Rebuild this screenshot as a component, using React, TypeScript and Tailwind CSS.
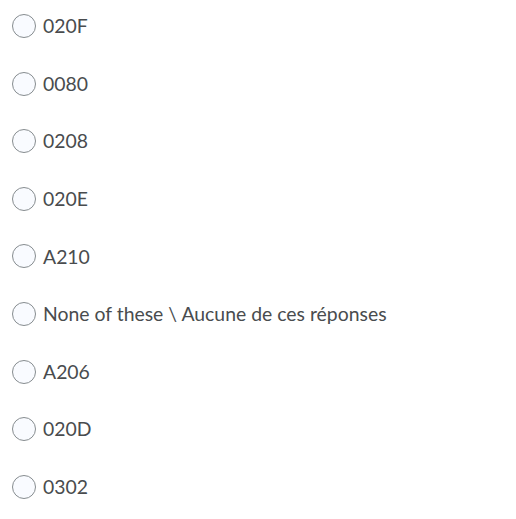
const options = [
  '020F',
  '0080',
  '0208',
  '020E',
  'A210',
  'None of these \\ Aucune de ces réponses',
  'A206',
  '020D',
  '0302',
];

export default function App() {
  return (
    <div
      className="min-h-[519px] w-[516px] bg-white pl-[12px] pt-[14px]"
      style={{ fontFamily: 'Lato, "Noto Sans", sans-serif' }}
    >
      <div className="flex flex-col gap-[33.6px]">
        {options.map((opt) => (
          <label key={opt} className="flex h-[24px] items-center gap-[7px] cursor-pointer">
            <span className="h-[24px] w-[24px] shrink-0 rounded-full border border-[#868c8f] bg-[#f9fbff]" />
            <span className="text-[19.4px] leading-none text-[#494c4e]">{opt}</span>
          </label>
        ))}
      </div>
    </div>
  );
}
